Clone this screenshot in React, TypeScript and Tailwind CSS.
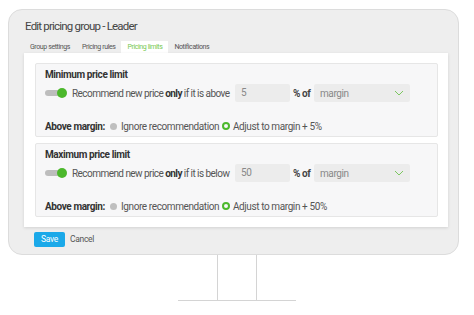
import { JSX } from "react";

const font = "font-['Roboto',sans-serif]";

function Toggle() {
  return (
    <div className="relative w-[22px] h-[10px] flex items-center shrink-0">
      <div className="w-[20px] h-[6px] rounded-full bg-[#bdbdbd]" />
      <div className="absolute right-0 top-0 w-[10px] h-[10px] rounded-full bg-[#4cb82c]" />
    </div>
  );
}

function LimitCard({
  title,
  direction,
  value,
  adjust,
}: {
  title: string;
  direction: string;
  value: string;
  adjust: string;
}): JSX.Element {
  return (
    <div className="h-[74px] bg-[#f7f7f8] border border-[#e6e6e6] rounded-[2px] pl-[9px] flex flex-col whitespace-nowrap text-[10px] tracking-[-0.4px]">
      <p className="mt-[4px] h-[14px] leading-[14px] font-bold text-[#333]">
        {title}
      </p>
      <div className="mt-[2px] h-[18px] flex items-center">
        <Toggle />
        <span className="ml-[5px] w-[163px] text-[#555] tracking-[-0.55px]">
          Recommend new price <b className="text-[#333]">only</b> if it is {direction}
        </span>
        <div className="w-[55px] h-[18px] bg-[#ececec] rounded-[2px] text-[#888] pl-[6px] leading-[18px]">
          {value}
        </div>
        <span className="ml-[3px] w-[21px] font-bold text-[#444]">% of</span>
        <div className="w-[96px] h-[18px] bg-[#ececec] rounded-[2px] text-[#888] pl-[6px] pr-[6px] flex items-center justify-between">
          <span>margin</span>
          <svg width="10" height="6" viewBox="0 0 10 6" fill="none">
            <path d="M1 1l4 4 4-4" stroke="#7cc760" strokeWidth="1" />
          </svg>
        </div>
      </div>
      <div className="mt-[17px] h-[14px] flex items-center">
        <span className="w-[65px] font-bold text-[#333]">Above margin:</span>
        <span className="w-[7px] h-[7px] rounded-full bg-[#bfbfbf]" />
        <span className="ml-[4px] w-[101px] text-[#555]">Ignore recommendation</span>
        <span className="w-[8px] h-[8px] rounded-full border-2 border-[#4cb82c]" />
        <span className="ml-[3px] text-[#555]">{adjust}</span>
      </div>
    </div>
  );
}

export default function App() {
  const tabs = ["Group settings", "Pricing rules", "Pricing limits", "Notifications"];
  return (
    <div className={`w-[474px] h-[315px] bg-white overflow-hidden ${font}`}>
      <div className="ml-[8px] mt-[9px] w-[451px] h-[246px] bg-[#eeeeee] border border-[#dcdcdc] rounded-[14px] pl-[15px] flex flex-col">
        <h1 className="mt-[7px] ml-[1px] h-[18px] leading-[18px] text-[11.5px] tracking-[-0.8px] text-[#444]">
          Edit pricing group - Leader
        </h1>
        <div className="mt-[6px] h-[12px] flex items-end text-[7px] tracking-[-0.4px] text-[#555] whitespace-nowrap">
          {tabs.map((t) =>
            t == "Pricing limits" ? (
              <div key={t} className="h-[12px] px-[6px] bg-white text-[#78c850] leading-[12px]">
                {t}
              </div>
            ) : (
              <div key={t} className="h-[12px] px-[6px] leading-[12px]">
                {t}
              </div>
            ),
          )}
        </div>
        <div className="w-[424px] h-[174px] bg-white shadow-[0_1px_3px_rgba(0,0,0,0.12)] pt-[10px] pl-[11px] pr-[10px] flex flex-col gap-[6px]">
          <LimitCard title="Minimum price limit" direction="above" value="5" adjust="Adjust to margin + 5%" />
          <LimitCard title="Maximum price limit" direction="below" value="50" adjust="Adjust to margin + 50%" />
        </div>
        <div className="mt-[5px] pl-[10px] flex items-center gap-[5px] tracking-[-0.3px]">
          <button className="w-[31px] h-[15px] bg-[#1ba9e9] rounded-[2px] text-white text-[8.5px]">
            Save
          </button>
          <span className="text-[8.5px] text-[#555]">Cancel</span>
        </div>
      </div>
      <div className="ml-[217px] w-[40px] h-[45px] border-x border-[#d4d4d4]" />
      <div className="ml-[178px] w-[118px] h-[1px] bg-[#d4d4d4]" />
    </div>
  );
}
